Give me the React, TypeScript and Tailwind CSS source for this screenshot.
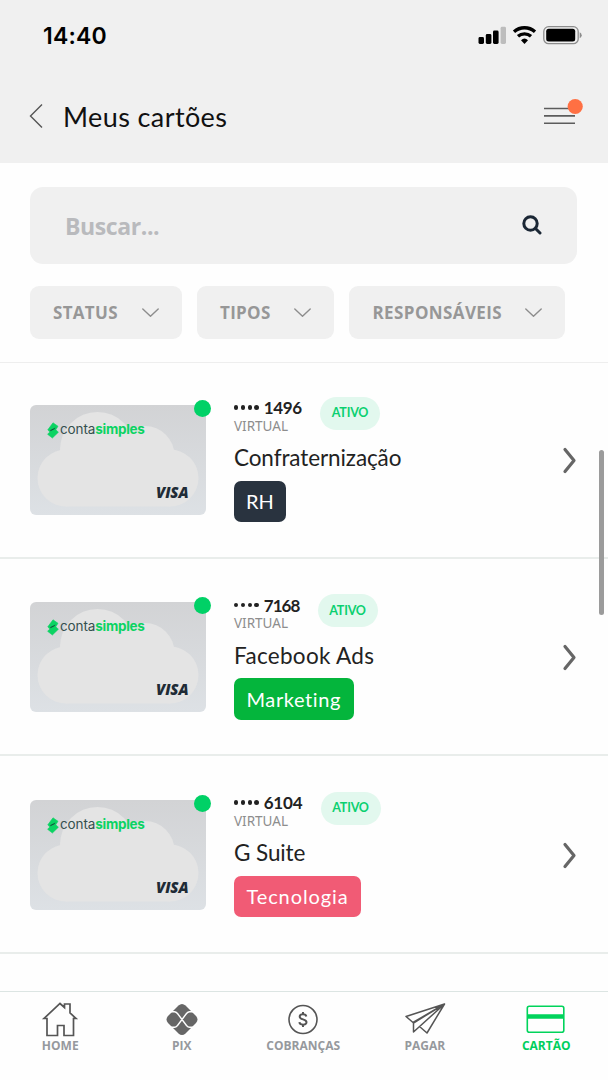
import React from "react";

const SANS = "font-['Open_Sans',sans-serif]";
const NOTO = "font-['Noto_Sans',sans-serif]";
const LATO = "font-['Lato',sans-serif]";

function StatusBar() {
  return (
    <div className="flex h-[70px] items-center justify-between pl-[43px] pr-[26px]">
      <span className="mt-[2px] font-['Inter',sans-serif] text-[23px] font-semibold leading-none tracking-[0.2px] text-black">14:40</span>
      <svg width="104" height="20" viewBox="0 0 104 20" className="block">
        <rect x="0.5" y="12" width="5.5" height="7" rx="1.4" />
        <rect x="7.8" y="9" width="5.6" height="10" rx="1.4" />
        <rect x="15" y="5.5" width="5.6" height="13.5" rx="1.4" />
        <rect x="22.6" y="1.8" width="5.4" height="17.2" rx="1.4" fill="#bdbdbd" />
        <path d="M36 6.8a15.600 15.600 0 0 1 21 0M40 11.300a9.700 9.700 0 0 1 13 0" fill="none" stroke="#000" strokeWidth="3.300" />
        <path d="M43 15.200a5.200 5.200 0 0 1 7 0l-3.500 3.800z" />
        <rect x="65.800" y="1.700" width="34.400" height="17" rx="4.800" fill="none" stroke="#8c8c8c" strokeWidth="1.300" />
        <rect x="68.200" y="3.700" width="29" height="12.800" rx="2.500" />
        <path d="M101.700 7.300q2 .8 2 3t-2 3z" fill="#8c8c8c" />
      </svg>
    </div>
  );
}

function TitleBar() {
  return (
    <div className="flex h-[93px] items-center pl-[29px] pr-[24px]">
      <svg width="14" height="26" viewBox="0 0 14 26" fill="none" stroke="#555" strokeWidth="1.400" className="-mt-[2px]">
        <path d="M13 1.500L1.500 13L13 24.500" />
      </svg>
      <h1 className={`ml-[20px] flex-1 ${LATO} text-[27px] leading-none tracking-[0.400px] text-[#111]`}>Meus cartões</h1>
      <svg width="41" height="30" viewBox="0 0 41 30" fill="none" className="-mt-[10px] block">
        <path d="M1 11.500h31M1 18.900h31M1 26.200h31" stroke="#5c5c5c" strokeWidth="1.600" />
        <circle cx="32.200" cy="9.500" r="7.600" fill="#ff7043" />
      </svg>
    </div>
  );
}

function Filter({ label, width, tracking }: { label: string; width: string; tracking: string }) {
  return (
    <button className={`flex h-[53px] items-center justify-between rounded-[9px] bg-[#f0f0f0] pl-[23.500px] pr-[23px] ${width}`}>
      <span className={`${SANS} text-[17px] font-bold leading-none text-[#979797] ${tracking}`}>{label}</span>
      <svg width="17" height="10" viewBox="0 0 17 10" fill="none" stroke="#8d8d8d" strokeWidth="1.400" strokeLinecap="round" strokeLinejoin="round">
        <path d="M.8 1L8.500 8.300L16.200 1" />
      </svg>
    </button>
  );
}

function CardArt() {
  return (
    <div className="relative h-[110px] w-[176px] shrink-0 rounded-[6px] bg-linear-to-b from-[#d2d3d5] to-[#dde1e5]">
      <svg width="176" height="110" viewBox="0 0 176 110" className="absolute inset-0 block">
        <g fill="#e4e4e4">
          <circle cx="67.500" cy="44.500" r="37.500" />
          <circle cx="115" cy="50.500" r="29.500" />
          <circle cx="36" cy="73" r="28.500" />
          <circle cx="140" cy="73" r="28.500" />
          <rect x="36" y="46" width="104" height="55.500" />
        </g>
        <path d="M17.800 24.800L23 17.800L28 21.300L25.800 24.800L28.400 27.200L22.400 33L17.600 29.300L19.800 27Z" fill="#0bd363" strokeLinejoin="round" stroke="#0bd363" strokeWidth=".6" />
        <path d="M20.500 25l5-2.600-1.200 1.800-4 2z" fill="#17483c" />
      </svg>
      <div className="absolute left-[30px] top-[16px] font-['Inter',sans-serif] text-[13.500px] leading-[16px] text-[#35504f]">
        <span className="tracking-[-0.1px]">conta</span>
        <span className="font-bold tracking-[-0.300px] text-[#0bd363]">simples</span>
      </div>
      <span className={`absolute left-[126px] top-[80px] ${SANS} text-[15px] font-extrabold italic leading-[15px] tracking-[-0.100px] text-[#202b36]`}>VISA</span>
      <span className="absolute -right-[4.500px] -top-[5px] size-[17px] rounded-full bg-[#00d166]" />
    </div>
  );
}

type CardRow = {
  digits: string;
  name: string;
  tag: string;
  rowClass: string;
  tagClass: string;
  digitsClass: string;
  numberClass: string;
  nameClass: string;
};

const cards: CardRow[] = [
  { digits: "1496", name: "Confraternização", tag: "RH", rowClass: "h-[195.500px] pt-[41.500px]", tagClass: "w-[52px] bg-[#29333f]", digitsClass: "w-[86px]", numberClass: "tracking-[-0.300px]", nameClass: "tracking-[-0.100px]" },
  { digits: "7168", name: "Facebook Ads", tag: "Marketing", rowClass: "h-[197.500px] pt-[43.500px]", tagClass: "w-[119.500px] tracking-[0.600px] bg-[#04b53c]", digitsClass: "w-[83.500px]", numberClass: "tracking-[-0.900px]", nameClass: "tracking-[0.300px]" },
  { digits: "6104", name: "G Suite", tag: "Tecnologia", rowClass: "h-[197.500px] pt-[43.500px]", tagClass: "w-[127px] tracking-[0.900px] bg-[#f15b75]", digitsClass: "w-[86.500px]", numberClass: "tracking-[-0.200px]", nameClass: "tracking-[-0.100px]" },
];

function Row({ card }: { card: CardRow }) {
  return (
    <li className={`flex items-start border-b-2 border-[#e9edeb] pl-[30px] pr-[31px] ${card.rowClass}`}>
      <CardArt />
      <div className="-mt-[8px] ml-[28px] flex-1">
        <div className="flex h-[38px]">
          <div className={card.digitsClass}>
            <div className="flex h-[22px] items-center gap-[5px]">
              <span className="flex gap-[2.500px]">
                {[0, 1, 2, 3].map((i) => (
                  <i key={i} className="size-[4.300px] rounded-full bg-[#222]" />
                ))}
              </span>
              <span className={`${LATO} text-[17px] font-bold leading-none text-[#222] ${card.numberClass}`}>{card.digits}</span>
            </div>
            <div className={`${NOTO} text-[13.500px] leading-[15px] text-[#8d8d8d]`}>VIRTUAL</div>
          </div>
          <span className={`flex h-[33px] w-[60px] items-center justify-center rounded-full bg-[#e2f8ee] pt-[1px] ${LATO} text-[12.500px] font-bold tracking-[-0.200px] text-[#0bd070]`}>ATIVO</span>
        </div>
        <div className={`mt-[8.500px] h-[30px] whitespace-nowrap ${LATO} text-[22.500px] leading-[30px] text-[#222] ${card.nameClass}`}>{card.name}</div>
        <div className={`mt-[7.500px] flex h-[41.500px] items-center justify-center rounded-[7px] ${LATO} text-[20px] text-white ${card.tagClass}`}>{card.tag}</div>
      </div>
      <svg width="15" height="27" viewBox="0 0 15 27" fill="none" stroke="#666" strokeWidth="3.200" strokeLinecap="round" strokeLinejoin="round" className="mt-[42px] block">
        <path d="M3 2.500L12 13.500L3 24.500" />
      </svg>
    </li>
  );
}

function NavItem({ label, color, children }: { label: string; color: string; children: React.ReactNode }) {
  return (
    <a className="flex w-[121.500px] flex-col items-center pt-[9px]">
      <svg width="42" height="36" viewBox="0 0 42 36" fill="none" className="block">{children}</svg>
      <span className={`mt-[1px] ${SANS} text-[12px] font-bold leading-[15px] ${color}`}>{label}</span>
    </a>
  );
}

function BottomNav() {
  return (
    <nav className="flex h-[89px] shrink-0 border-t border-[#dce5e3] bg-[#fefefe]">
      <div className="-ml-[0.5px] flex">
        <NavItem label="HOME" color="text-[#96999d]">
          <path d="M8 34.500V17.500H5L21 2.500L25.500 6.500V3H31V12L37 17.500H34.500V34.500H25V24.500H18.500V34.500Z" stroke="#555" strokeWidth="1.700" />
        </NavItem>
        <NavItem label="PIX" color="text-[#96999d]">
          <path d="M17.500 4.500Q21 1.500 24.500 4.500L35 15Q38 18.500 35 22L24.500 32.500Q21 35.500 17.500 32.500L7 22Q4 18.500 7 15Z" fill="#666" />
          <path d="M10 10.700H13.500Q15 10.700 16.500 12.500L25.500 24.500Q27 26.300 28.500 26.300H32M32 10.700H28.500Q27 10.700 25.500 12.500L16.500 24.500Q15 26.300 13.500 26.300H10" stroke="#fefefe" strokeWidth="1.400" />
        </NavItem>
        <NavItem label="COBRANÇAS" color="text-[#96999d]">
          <circle cx="21" cy="18.500" r="14" stroke="#555" strokeWidth="1.600" />
          <path d="M24.300 15.500C23.800 12.500 17.700 12.600 17.700 15.700C17.700 19 24.500 17.800 24.500 21.200C24.500 24.500 17.700 24.400 17.400 21.200M21 11V13.500M21 23.500V26" stroke="#555" strokeWidth="2" />
        </NavItem>
        <NavItem label="PAGAR" color="text-[#96999d]">
          <path d="M40.500 3L2 15.500L9 21.500L40.500 3L9.500 22V31L40.500 3L23 32L15.500 25.500" stroke="#555" strokeWidth="1.500" strokeLinejoin="round" />
        </NavItem>
        <NavItem label="CARTÃO" color="text-[#00cf5d]">
          <rect x="2.300" y="5.300" width="36.500" height="26" rx="2" stroke="#00d35b" strokeWidth="1.600" />
          <path d="M2 15.500h37" stroke="#00d35b" strokeWidth="4.600" />
        </NavItem>
      </div>
    </nav>
  );
}

export default function App() {
  return (
    <div className="relative flex h-[1080px] w-[608px] flex-col overflow-hidden bg-[#fefefe]">
      <header className="h-[163px] shrink-0 bg-[#f0f0f0]">
        <StatusBar />
        <TitleBar />
      </header>
      <section className="h-[200px] shrink-0 border-b border-[#eee] px-[29.500px] pt-[23.500px]">
        <div className="flex h-[77px] w-[547.500px] items-center justify-between rounded-[13px] bg-[#f0f0f0] pl-[35.500px] pr-[35px]">
          <span className={`${SANS} mt-[2px] text-[23px] font-bold tracking-[-0.400px] text-[#b9babd]`}>Buscar...</span>
          <svg width="20" height="20" viewBox="0 0 20 20" fill="none" stroke="#1b2735" strokeWidth="3" strokeLinecap="round">
            <circle cx="8.500" cy="8.500" r="6.700" />
            <path d="M13.500 13.500L18 18" />
          </svg>
        </div>
        <div className="mt-[22.500px] flex gap-[15px]">
          <Filter label="STATUS" width="w-[152px]" tracking="tracking-[0.300px]" />
          <Filter label="TIPOS" width="w-[137.500px]" tracking="tracking-[0.300px]" />
          <Filter label="RESPONSÁVEIS" width="w-[216px]" tracking="tracking-[0.400px]" />
        </div>
      </section>
      <ul className="min-h-0 flex-1 overflow-hidden">
        {cards.map((c) => (
          <Row key={c.digits} card={c} />
        ))}
      </ul>
      <BottomNav />
      <div className="absolute right-[4.500px] top-[450px] h-[165px] w-[5px] rounded-full bg-[#9b9b9b]" />
    </div>
  );
}
